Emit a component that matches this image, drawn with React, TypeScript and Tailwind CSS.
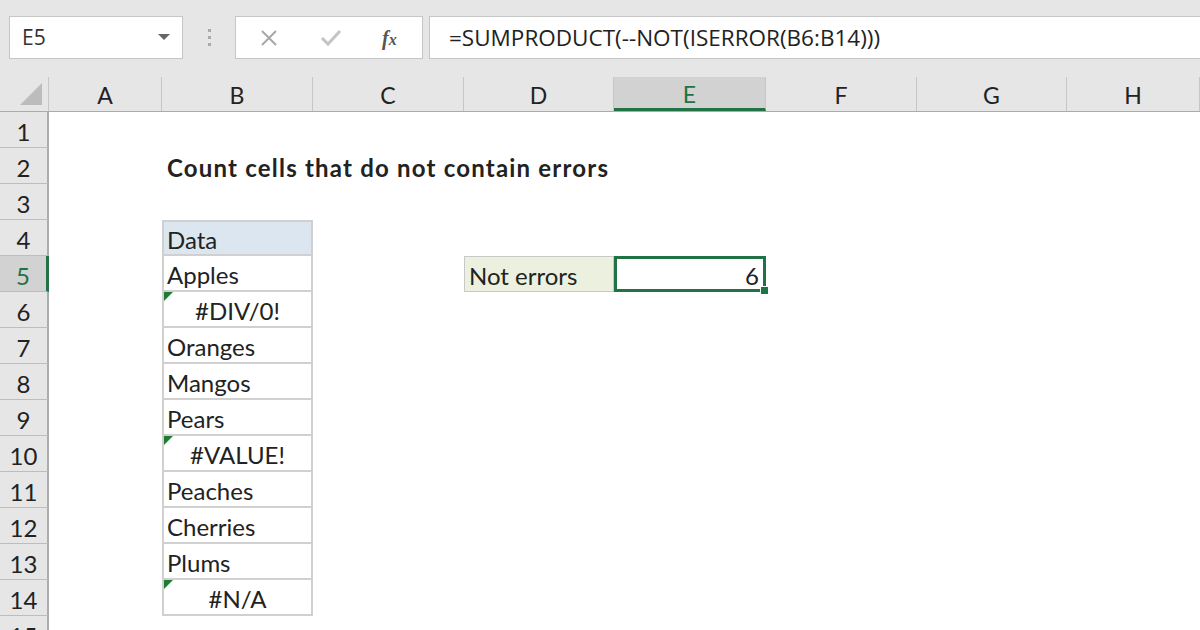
import React from "react";

const cols = [
  { key: "A", w: "w-[113px]" },
  { key: "B", w: "w-[151px]" },
  { key: "C", w: "w-[151px]" },
  { key: "D", w: "w-[150px]" },
  { key: "E", w: "w-[152px]" },
  { key: "F", w: "w-[151px]" },
  { key: "G", w: "w-[150px]" },
  { key: "H", w: "w-[133px]" },
];

const data: Record<number, { text: string; error?: boolean }> = {
  5: { text: "Apples" },
  6: { text: "#DIV/0!", error: true },
  7: { text: "Oranges" },
  8: { text: "Mangos" },
  9: { text: "Pears" },
  10: { text: "#VALUE!", error: true },
  11: { text: "Peaches" },
  12: { text: "Cherries" },
  13: { text: "Plums" },
  14: { text: "#N/A", error: true },
};

function ErrorFlag() {
  return (
    <svg className="absolute left-0 top-0" width="9" height="9" viewBox="0 0 9 9">
      <polygon points="0,0 9,0 0,9" fill="#1e7b34" />
    </svg>
  );
}

function Cell({ row, col }: { row: number; col: string }) {
  if (col === "B" && row === 2) {
    return (
      <div className="relative h-full w-full">
        <span className="absolute left-[5px] top-1/2 -translate-y-[45%] whitespace-nowrap text-[24px] font-bold tracking-[1.2px]">
          Count cells that do not contain errors
        </span>
      </div>
    );
  }
  if (col === "B" && row === 4) {
    return (
      <div className="flex h-full w-full items-center border-2 border-[#d0d0d0] bg-[#dce6f1] pl-[3px] pt-[4px]">
        Data
      </div>
    );
  }
  if (col === "B" && row >= 5 && row <= 14) {
    const d = data[row];
    return (
      <div
        className={
          "relative flex h-[calc(100%+2px)] -mt-[2px] w-full items-center border-2 border-[#d0d0d0] pt-[4px] " +
          (d.error ? "justify-center" : "pl-[3px]")
        }
      >
        {d.error && <ErrorFlag />}
        {d.text}
      </div>
    );
  }
  if (col === "D" && row === 5) {
    return (
      <div className="flex h-full w-full items-center border border-[#c8c8c8] bg-[#ebf1de] pl-[4px] pt-[4px]">
        Not errors
      </div>
    );
  }
  if (col === "E" && row === 5) {
    return (
      <div className="relative flex h-full w-full items-center justify-end border-[3px] border-[#217346] pr-[4px] pt-[4px]">
        6
        <div className="absolute -bottom-[6px] -right-[6px] h-[9px] w-[9px] border border-white bg-[#217346]" />
      </div>
    );
  }
  return null;
}

export default function App() {
  const rows = Array.from({ length: 15 }, (_, i) => i + 1);
  return (
    <div className="h-[630px] w-[1200px] overflow-hidden bg-[#e6e6e6] font-['Open_Sans',sans-serif] text-[#222]">
      {/* formula bar */}
      <div className="flex h-[77px] items-start pt-[16px]">
        <div className="ml-[9px] flex h-[43px] w-[174px] shrink-0 items-center justify-between border border-[#c6c6c6] bg-white pl-[12px] pr-[12px]">
          <span className="text-[21px] text-[#333]">E5</span>
          <svg width="12" height="7" viewBox="0 0 12 7">
            <polygon points="0,0 12,0 6,6" fill="#666" />
          </svg>
        </div>
        <div className="flex h-[43px] w-[52px] shrink-0 flex-col items-center justify-center gap-[4px]">
          <div className="h-[3px] w-[3px] bg-[#aaa]" />
          <div className="h-[3px] w-[3px] bg-[#aaa]" />
          <div className="h-[3px] w-[3px] bg-[#aaa]" />
        </div>
        <div className="flex h-[43px] w-[188px] shrink-0 items-center border border-[#c6c6c6] bg-white">
          <svg className="ml-[24px]" width="18" height="18" viewBox="0 0 18 18">
            <path d="M2 2 L16 16 M16 2 L2 16" stroke="#a8a8a8" strokeWidth="2" />
          </svg>
          <svg className="ml-[42px]" width="22" height="18" viewBox="0 0 22 18">
            <path d="M2 9 L8 15 L20 2" stroke="#c4c4c4" strokeWidth="3" fill="none" />
          </svg>
          <span className="ml-[40px] font-['Liberation_Serif',serif] text-[20px] font-bold italic text-[#555]">
            f<span className="text-[16px]">x</span>
          </span>
        </div>
        <div className="ml-[6px] flex h-[43px] flex-1 items-center border border-r-0 border-[#c6c6c6] bg-white pl-[19px]">
          <span className="whitespace-nowrap text-[22.5px] text-[#222]">=SUMPRODUCT(--NOT(ISERROR(B6:B14)))</span>
        </div>
      </div>

      {/* column headers */}
      <div className="flex h-[35px] border-b border-[#ababab]">
        <div className="relative w-[49px] shrink-0 border-r border-[#c6c6c6]">
          <svg className="absolute bottom-[6px] right-[6px]" width="22" height="22" viewBox="0 0 22 22">
            <polygon points="22,0 22,22 0,22" fill="#bcbcbc" />
          </svg>
        </div>
        {cols.map((c) => (
          <div
            key={c.key}
            className={
              "flex shrink-0 items-center justify-center border-r border-[#c6c6c6] pt-[3px] font-['Lato',sans-serif] text-[23px] " +
              c.w +
              (c.key === "E" ? " border-b-[3px] border-b-[#217346] bg-[#d2d2d2] text-[#217346]" : "")
            }
          >
            {c.key}
          </div>
        ))}
      </div>

      {/* sheet */}
      <div className="font-['Lato',sans-serif] text-[24px]">
        {rows.map((r) => (
          <div key={r} className="flex h-[36px]">
            <div
              className={
                "flex w-[49px] shrink-0 items-center justify-center border-b border-[#bdbdbd] pt-[4px] " +
                (r === 5
                  ? "border-r-[3px] border-r-[#217346] bg-[#d2d2d2] text-[#217346]"
                  : "border-r-2 border-r-[#ababab] bg-[#e6e6e6]")
              }
            >
              {r}
            </div>
            <div className="flex flex-1 bg-white">
              {cols.map((c) => (
                <div key={c.key} className={"h-full shrink-0 " + c.w}>
                  <Cell row={r} col={c.key} />
                </div>
              ))}
            </div>
          </div>
        ))}
      </div>
    </div>
  );
}
